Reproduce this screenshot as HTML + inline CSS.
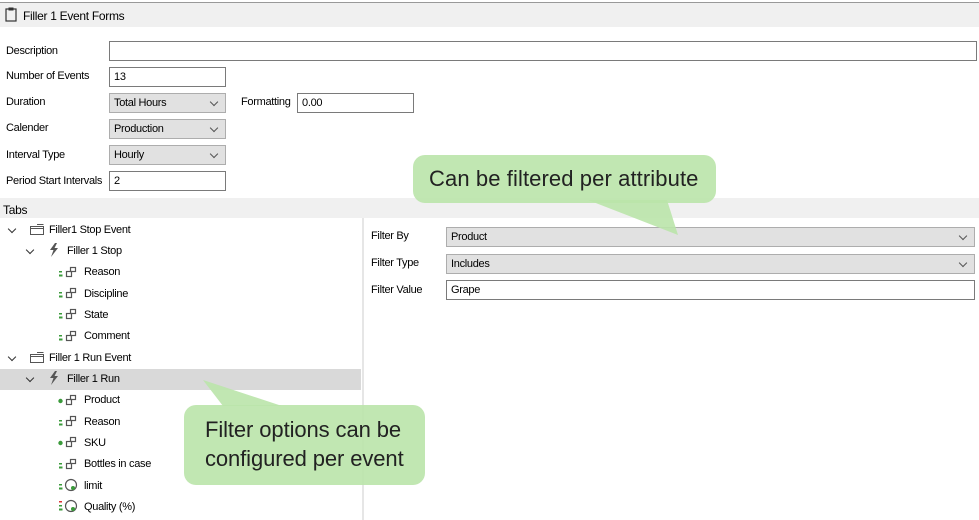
<!DOCTYPE html>
<html><head><style>
*{margin:0;padding:0;box-sizing:border-box}
body{width:979px;height:520px;background:#fff;font-family:"Liberation Sans",sans-serif;font-size:11px;color:#000;position:relative;overflow:hidden;letter-spacing:-0.3px}
.a{position:absolute}
.lbl{position:absolute;font-size:11px}
.tb{position:absolute;border:1px solid #7a7a7a;background:#fff;height:20px;padding:3px 4px;font-size:11px}
.cb{position:absolute;border:1px solid #adadad;background:#e1e1e1;height:20px;padding:3px 4px;font-size:11px}
.cb:after{content:"";position:absolute;right:8px;top:5px;width:5px;height:5px;border-right:1px solid #555;border-bottom:1px solid #555;transform:rotate(45deg)}
.tr{position:absolute;font-size:11px}
.chev{position:absolute;width:6px;height:6px;border-right:1.3px solid #333;border-bottom:1.3px solid #333;transform:rotate(45deg)}
.callout{position:absolute;background:rgba(186,228,170,0.9);border-radius:12px;font-family:"Liberation Sans",sans-serif;color:#222;white-space:nowrap}
</style></head><body>
<div class="a" style="left:0;top:2px;width:979px;height:1px;background:#999"></div>
<div class="a" style="left:0;top:3px;width:979px;height:24px;background:#f0f0f0"></div>
<svg class="a" style="left:5px;top:7px" width="12" height="15" viewBox="0 0 12 15"><rect x="1" y="2" width="10" height="12" fill="none" stroke="#333" stroke-width="1.2"/><rect x="3.5" y="0.5" width="5" height="3" fill="#333"/></svg>
<div class="lbl" style="left:23px;top:9px;font-size:12px">Filler 1 Event Forms</div>

<div class="lbl" style="left:6px;top:45px">Description</div>
<div class="tb" style="left:109px;top:41px;width:868px"></div>
<div class="lbl" style="left:6px;top:70px">Number of Events</div>
<div class="tb" style="left:109px;top:67px;width:117px">13</div>
<div class="lbl" style="left:6px;top:96px">Duration</div>
<div class="cb" style="left:109px;top:93px;width:117px">Total Hours</div>
<div class="lbl" style="left:241px;top:96px">Formatting</div>
<div class="tb" style="left:297px;top:93px;width:117px">0.00</div>
<div class="lbl" style="left:6px;top:122px">Calender</div>
<div class="cb" style="left:109px;top:119px;width:117px">Production</div>
<div class="lbl" style="left:6px;top:149px">Interval Type</div>
<div class="cb" style="left:109px;top:145px;width:117px">Hourly</div>
<div class="lbl" style="left:6px;top:175px">Period Start Intervals</div>
<div class="tb" style="left:109px;top:171px;width:117px">2</div>

<div class="a" style="left:0;top:198px;width:979px;height:20px;background:#f0f0f0"></div>
<div class="lbl" style="left:3px;top:203px;font-size:12px">Tabs</div>
<div class="a" style="left:362px;top:218px;width:2px;height:302px;background:#e6e6e6"></div>

<div class="a" style="left:0;top:369px;width:361px;height:21px;background:#d9d9d9"></div>

<div class="chev" style="left:9px;top:226px"></div>
<svg class="a" style="left:30px;top:224px" width="14" height="11"><rect x="0.5" y="2.5" width="13" height="8" fill="none" stroke="#555"/><line x1="0.5" y1="4.5" x2="13.5" y2="4.5" stroke="#555"/><line x1="7" y1="0.5" x2="13.5" y2="0.5" stroke="#555"/></svg>
<div class="tr" style="left:49px;top:224px">Filler1 Stop Event</div>
<div class="chev" style="left:27px;top:247px"></div>
<svg class="a" style="left:49px;top:243px" width="10" height="14"><polygon points="6,0 1,7 4.5,7 2,14 9,5 5.5,5 8,0" fill="#555"/></svg>
<div class="tr" style="left:67px;top:245px">Filler 1 Stop</div>

<div class="chev" style="left:9px;top:354px"></div>
<svg class="a" style="left:30px;top:352px" width="14" height="11"><rect x="0.5" y="2.5" width="13" height="8" fill="none" stroke="#555"/><line x1="0.5" y1="4.5" x2="13.5" y2="4.5" stroke="#555"/><line x1="7" y1="0.5" x2="13.5" y2="0.5" stroke="#555"/></svg>
<div class="tr" style="left:49px;top:352px">Filler 1 Run Event</div>
<div class="chev" style="left:27px;top:375px"></div>
<svg class="a" style="left:49px;top:371px" width="10" height="14"><polygon points="6,0 1,7 4.5,7 2,14 9,5 5.5,5 8,0" fill="#555"/></svg>
<div class="tr" style="left:67px;top:373px">Filler 1 Run</div>

<svg class="a" style="left:58px;top:265px" width="22" height="250">
<g fill="none" stroke="#555" stroke-width="1.2">
<g transform="translate(0,0)"><rect x="8.5" y="6.5" width="5" height="5"/><rect x="12.5" y="2.5" width="5" height="4"/></g>
<g transform="translate(0,21)"><rect x="8.5" y="6.5" width="5" height="5"/><rect x="12.5" y="2.5" width="5" height="4"/></g>
<g transform="translate(0,42)"><rect x="8.5" y="6.5" width="5" height="5"/><rect x="12.5" y="2.5" width="5" height="4"/></g>
<g transform="translate(0,64)"><rect x="8.5" y="6.5" width="5" height="5"/><rect x="12.5" y="2.5" width="5" height="4"/></g>
<g transform="translate(0,128)"><rect x="8.5" y="6.5" width="5" height="5"/><rect x="12.5" y="2.5" width="5" height="4"/></g>
<g transform="translate(0,149)"><rect x="8.5" y="6.5" width="5" height="5"/><rect x="12.5" y="2.5" width="5" height="4"/></g>
<g transform="translate(0,170)"><rect x="8.5" y="6.5" width="5" height="5"/><rect x="12.5" y="2.5" width="5" height="4"/></g>
<g transform="translate(0,192)"><rect x="8.5" y="6.5" width="5" height="5"/><rect x="12.5" y="2.5" width="5" height="4"/></g>
<circle cx="13" cy="220" r="5.5"/><circle cx="13" cy="241" r="5.5"/>
</g>
<g fill="#3a9a3a">
<rect x="1" y="6" width="3" height="1.5"/><rect x="1" y="9.5" width="3.5" height="2"/>
<rect x="1" y="27" width="3" height="1.5"/><rect x="1" y="30.5" width="3.5" height="2"/>
<rect x="1" y="48" width="3" height="1.5"/><rect x="1" y="51.5" width="3.5" height="2"/>
<rect x="1" y="70" width="3" height="1.5"/><rect x="1" y="73.5" width="3.5" height="2"/>
<circle cx="2.5" cy="136" r="2.2"/>
<rect x="1" y="155" width="3" height="1.5"/><rect x="1" y="158.5" width="3.5" height="2"/>
<circle cx="2.5" cy="178" r="2.2"/>
<rect x="1" y="198" width="3" height="1.5"/><rect x="1" y="201.5" width="3.5" height="2"/>
<rect x="1" y="219" width="3" height="1.5"/><rect x="1" y="222.5" width="3.5" height="2"/>
<rect x="1" y="240" width="3" height="1.5"/><rect x="1" y="243.5" width="3.5" height="2"/>
<circle cx="15" cy="223" r="2"/><circle cx="15" cy="244" r="2"/>
</g>
<rect x="1" y="236" width="3" height="1.5" fill="#d33"/>
</svg>
<div class="tr" style="left:84px;top:266px">Reason</div>
<div class="tr" style="left:84px;top:288px">Discipline</div>
<div class="tr" style="left:84px;top:309px">State</div>
<div class="tr" style="left:84px;top:330px">Comment</div>
<div class="tr" style="left:84px;top:394px">Product</div>
<div class="tr" style="left:84px;top:416px">Reason</div>
<div class="tr" style="left:84px;top:437px">SKU</div>
<div class="tr" style="left:84px;top:458px">Bottles in case</div>
<div class="tr" style="left:84px;top:480px">limit</div>
<div class="tr" style="left:84px;top:501px">Quality (%)</div>

<div class="lbl" style="left:371px;top:230px">Filter By</div>
<div class="cb" style="left:446px;top:227px;width:529px">Product</div>
<div class="lbl" style="left:371px;top:257px">Filter Type</div>
<div class="cb" style="left:446px;top:254px;width:529px">Includes</div>
<div class="lbl" style="left:371px;top:284px">Filter Value</div>
<div class="tb" style="left:446px;top:280px;width:529px">Grape</div>

<svg class="a" style="left:0;top:0" width="979" height="520">
<polygon points="588,200 667,200 678,235" fill="rgba(186,228,170,0.9)"/>
<polygon points="223,406 282,406 203,380" fill="rgba(186,228,170,0.9)"/>
</svg>
<div class="callout" style="left:413px;top:155px;width:303px;height:48px;font-size:22px;letter-spacing:0.1px;padding:11px 0 0 16px">Can be filtered per attribute</div>
<div class="callout" style="left:184px;top:405px;width:241px;height:80px;font-size:22px;letter-spacing:-0.1px;line-height:29px;padding:10px 0 0 21px">Filter options can be<br>configured per event</div>
</body></html>
